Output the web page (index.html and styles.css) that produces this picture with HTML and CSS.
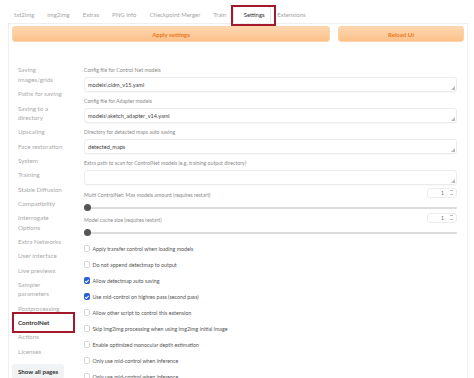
FILE: index.html
```html
<!DOCTYPE html>
<html lang="en">
<head>
    <meta charset="UTF-8">
    <meta name="viewport" content="width=device-width, initial-scale=1.0">
    <title>Settings - ControlNet</title>
    <link rel="stylesheet" href="styles.css">
</head>
<body>
    <nav class="tabs">
        <span class="tab">txt2img</span>
        <span class="tab">img2img</span>
        <span class="tab">Extras</span>
        <span class="tab">PNG Info</span>
        <span class="tab">Checkpoint Merger</span>
        <span class="tab">Train</span>
        <span class="tab tab--active">Settings</span>
        <span class="tab">Extensions</span>
    </nav>

    <div class="panel">
        <div class="actions">
            <button class="btn-orange">Apply settings</button>
            <button class="btn-orange">Reload UI</button>
        </div>

        <div class="settings">
            <!-- Sidebar with settings sections -->
            <aside class="sidebar">
                <div class="side-item">Saving images/grids</div>
                <div class="side-item">Paths for saving</div>
                <div class="side-item">Saving to a directory</div>
                <div class="side-item">Upscaling</div>
                <div class="side-item">Face restoration</div>
                <div class="side-item">System</div>
                <div class="side-item">Training</div>
                <div class="side-item">Stable Diffusion</div>
                <div class="side-item">Compatibility</div>
                <div class="side-item">Interrogate Options</div>
                <div class="side-item">Extra Networks</div>
                <div class="side-item">User interface</div>
                <div class="side-item">Live previews</div>
                <div class="side-item">Sampler parameters</div>
                <div class="side-item">Postprocessing</div>
                <div class="side-item side-item--active">ControlNet</div>
                <div class="side-item">Actions</div>
                <div class="side-item">Licenses</div>
                <button class="show-all">Show all pages</button>
            </aside>

            <!-- ControlNet settings -->
            <main class="main">
                <div class="field">
                    <label>Config file for Control Net models</label>
                    <div class="text-input">models\cldm_v15.yaml</div>
                </div>
                <div class="field">
                    <label>Config file for Adapter models</label>
                    <div class="text-input">models\sketch_adapter_v14.yaml</div>
                </div>
                <div class="field">
                    <label>Directory for detected maps auto saving</label>
                    <div class="text-input">detected_maps</div>
                </div>
                <div class="field">
                    <label>Extra path to scan for ControlNet models (e.g. training output directory)</label>
                    <div class="text-input"></div>
                </div>

                <div class="slider-field">
                    <div class="slider-head">
                        <label>Multi ControlNet: Max models amount (requires restart)</label>
                        <div class="number">1<span class="spin"></span></div>
                    </div>
                    <div class="slider"><span class="thumb"></span></div>
                </div>
                <div class="slider-field">
                    <div class="slider-head">
                        <label>Model cache size (requires restart)</label>
                        <div class="number">1<span class="spin"></span></div>
                    </div>
                    <div class="slider"><span class="thumb"></span></div>
                </div>

                <div class="checks">
                    <div class="check"><span class="box"></span>Apply transfer control when loading models</div>
                    <div class="check"><span class="box"></span>Do not append detectmap to output</div>
                    <div class="check"><span class="box box--on"></span>Allow detectmap auto saving</div>
                    <div class="check"><span class="box box--on"></span>Use mid-control on highres pass (second pass)</div>
                    <div class="check"><span class="box"></span>Allow other script to control this extension</div>
                    <div class="check"><span class="box"></span>Skip img2img processing when using img2img initial image</div>
                    <div class="check"><span class="box"></span>Enable optimized monocular depth estimation</div>
                    <div class="check"><span class="box"></span>Only use mid-control when inference</div>
                    <div class="check"><span class="box"></span>Only use mid-control when inference</div>
                </div>
            </main>
        </div>
    </div>
</body>
</html>
```

FILE: styles.css
```css
body {
    margin: 0;
    background-color: #fff;
    font-family: Lato, "Liberation Sans", sans-serif;
    color: #444;
    height: 378px;
    overflow: hidden;
}

.tabs {
    display: flex;
    height: 23px;
    padding-left: 7.5px;
}

.tab {
    position: relative;
    margin-top: 6px;
    padding: 0 6.5px;
    line-height: 17px;
    font-size: 6px;
    color: #a5a5a5;
    white-space: nowrap;
}

.tab--active {
    color: #333;
    background-color: #fff;
    border: 1px solid #e8e8e8;
    border-bottom: none;
    border-radius: 3px 3px 0 0;
    padding: 0 5px 0 10px;
    line-height: 16px;
}

/* red annotation box around the active tab */
.tab--active::after {
    content: "";
    position: absolute;
    left: -3px;
    right: -6px;
    top: -2px;
    bottom: -3px;
    border: 2px solid #a3182a;
}

.panel {
    margin: 0 6px 0 8px;
    padding: 2px 3px 0 3px;
    border: 1px solid #efefef;
    border-bottom: none;
    height: 400px;
}

.actions {
    display: grid;
    grid-template-columns: 318px 1fr;
    gap: 8px;
}

.btn-orange {
    height: 16px;
    border: 1px solid #fdd3a8;
    border-radius: 3px;
    background: linear-gradient(to bottom, #fed7b0, #fcc18a);
    color: #ea7a20;
    font-family: inherit;
    font-size: 6px;
    font-weight: bold;
    padding: 0;
}

.settings {
    display: flex;
    margin-top: 20px;
}

/* Sidebar styles */
.sidebar {
    width: 63px;
    flex-shrink: 0;
    padding-top: 1px;
    margin-right: 9px;
}

.side-item {
    position: relative;
    padding: 2.35px 12px 2.35px 6px;
    line-height: 9.6px;
    font-size: 6.3px;
    color: #ababab;
}

.side-item--active {
    color: #333;
    font-weight: bold;
}

.side-item--active::after {
    content: "";
    position: absolute;
    left: 0;
    right: 0;
    top: -4px;
    bottom: -3px;
    border: 2px solid #a3182a;
}

.show-all {
    margin-top: 1px;
    height: 15px;
    padding: 0 6px;
    border: none;
    border-radius: 3px;
    background-color: #f1f2f4;
    color: #333;
    font-family: inherit;
    font-size: 6.2px;
    font-weight: bold;
}

.main {
    flex: 1;
    padding: 3.5px 7px 0 0;
}

label {
    display: block;
    font-size: 5.2px;
    line-height: 9px;
    color: #8a8a8a;
}

.field {
    margin-bottom: 5px;
}

.field label {
    margin-bottom: 2px;
}

.text-input {
    position: relative;
    height: 15px;
    box-sizing: border-box;
    padding-left: 3px;
    border: 1px solid #ececec;
    border-radius: 3px;
    box-shadow: 0 1px 1px rgba(0, 0, 0, 0.03);
    font-size: 5.6px;
    line-height: 13px;
    color: #444;
}

/* resize grip */
.text-input::after {
    content: "";
    position: absolute;
    right: 1px;
    bottom: 1px;
    border-left: 4px solid transparent;
    border-bottom: 4px solid #b8b8b8;
}

.slider-field {
    margin-top: -2px;
}

.slider-field + .slider-field {
    margin-top: 1px;
}

.slider-head {
    display: flex;
    justify-content: space-between;
    height: 12px;
}

.slider-head label {
    align-self: flex-end;
}

.number {
    width: 30px;
    height: 10px;
    box-sizing: border-box;
    border: 1px solid #ececec;
    border-radius: 3px;
    font-size: 5px;
    line-height: 8px;
    color: #666;
    display: flex;
    justify-content: flex-end;
    align-items: center;
    padding-right: 3px;
    gap: 6px;
}

.spin {
    width: 3px;
    height: 5px;
    border-top: 1px solid #bbb;
    border-bottom: 1px solid #bbb;
    box-sizing: border-box;
}

.slider {
    position: relative;
    margin-top: 4px;
    height: 8px;
}

.slider::before {
    content: "";
    position: absolute;
    left: 0;
    right: 0;
    top: 3px;
    height: 2px;
    border-radius: 1px;
    background-color: #dcdcdc;
}

.thumb {
    position: absolute;
    left: 0;
    top: 0.5px;
    width: 7px;
    height: 7px;
    border-radius: 50%;
    background-color: #555;
}

.checks {
    margin-top: 4px;
}

.check {
    display: flex;
    align-items: center;
    height: 16px;
    font-size: 5.3px;
    color: #555;
}

.box {
    width: 6.5px;
    height: 6.5px;
    box-sizing: border-box;
    margin: 0 2.5px 0 -0.5px;
    border: 1px solid #d4d4d4;
    border-radius: 1.5px;
    background-color: #fff;
}

.box--on {
    border-color: #2d5fd6;
    background-color: #2d5fd6;
    position: relative;
}

.box--on::after {
    content: "";
    position: absolute;
    left: 1.3px;
    top: 0.3px;
    width: 1.4px;
    height: 3px;
    border: solid #fff;
    border-width: 0 1px 1px 0;
    transform: rotate(45deg);
}
```
